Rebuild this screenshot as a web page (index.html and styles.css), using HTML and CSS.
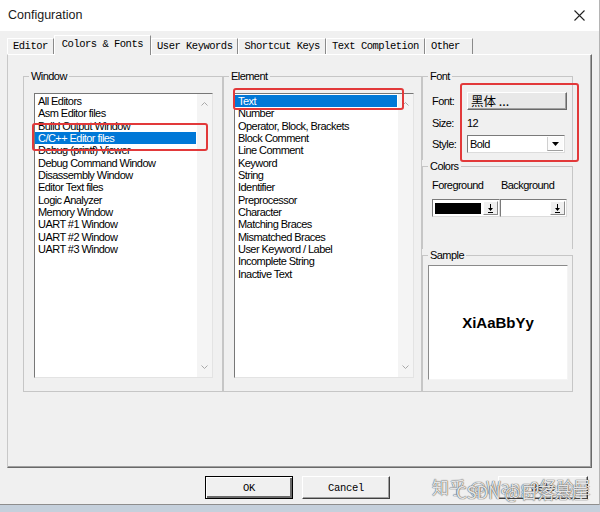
FILE: index.html
```html
<!DOCTYPE html>
<html lang="en">
<head>
  <meta charset="UTF-8">
  <title>Configuration</title>
  <link rel="stylesheet" href="styles.css">
</head>
<body>
  <div class="dialog">
    <div class="titlebar">
      <span class="title">Configuration</span>
      <svg class="close" width="11" height="11" viewBox="0 0 11 11"><path d="M0.5 0.5 10.5 10.5 M10.5 0.5 0.5 10.5" stroke="#222" stroke-width="1.1" fill="none"/></svg>
    </div>

    <div class="tabs">
      <div class="tab">Editor</div>
      <div class="tab active">Colors &amp; Fonts</div>
      <div class="tab">User Keywords</div>
      <div class="tab">Shortcut Keys</div>
      <div class="tab">Text Completion</div>
      <div class="tab">Other</div>
    </div>

    <div class="panel">
      <div class="groups">
        <fieldset class="group g-window">
          <legend>Window</legend>
          <div class="listbox">
            <div class="items">
              <div class="item">All Editors</div>
              <div class="item">Asm Editor files</div>
              <div class="item">Build Output Window</div>
              <div class="item sel">C/C++ Editor files</div>
              <div class="item">Debug (printf) Viewer</div>
              <div class="item">Debug Command Window</div>
              <div class="item">Disassembly Window</div>
              <div class="item">Editor Text files</div>
              <div class="item">Logic Analyzer</div>
              <div class="item">Memory Window</div>
              <div class="item">UART #1 Window</div>
              <div class="item">UART #2 Window</div>
              <div class="item">UART #3 Window</div>
            </div>
            <div class="scroll">
              <svg width="7" height="5" viewBox="0 0 7 5"><path d="M0.5 4.5 3.5 1.5 6.5 4.5" stroke="#a8a8a8" fill="none"/></svg>
              <svg width="7" height="5" viewBox="0 0 7 5"><path d="M0.5 0.5 3.5 3.5 6.5 0.5" stroke="#a8a8a8" fill="none"/></svg>
            </div>
          </div>
        </fieldset>

        <fieldset class="group g-element">
          <legend>Element</legend>
          <div class="listbox">
            <div class="items">
              <div class="item sel">Text</div>
              <div class="item">Number</div>
              <div class="item">Operator, Block, Brackets</div>
              <div class="item">Block Comment</div>
              <div class="item">Line Comment</div>
              <div class="item">Keyword</div>
              <div class="item">String</div>
              <div class="item">Identifier</div>
              <div class="item">Preprocessor</div>
              <div class="item">Character</div>
              <div class="item">Matching Braces</div>
              <div class="item">Mismatched Braces</div>
              <div class="item">User Keyword / Label</div>
              <div class="item">Incomplete String</div>
              <div class="item">Inactive Text</div>
            </div>
            <div class="scroll">
              <svg width="7" height="5" viewBox="0 0 7 5"><path d="M0.5 4.5 3.5 1.5 6.5 4.5" stroke="#a8a8a8" fill="none"/></svg>
              <svg width="7" height="5" viewBox="0 0 7 5"><path d="M0.5 0.5 3.5 3.5 6.5 0.5" stroke="#a8a8a8" fill="none"/></svg>
            </div>
          </div>
        </fieldset>

        <div class="col-font">
          <fieldset class="group g-font">
            <legend>Font</legend>
            <div class="font-grid">
              <span>Font:</span>
              <div class="font-btn">黑体 ...</div>
              <span>Size:</span>
              <span class="size">12</span>
              <span>Style:</span>
              <div class="combo">
                <span class="combo-text">Bold</span>
                <div class="drop">
                  <svg width="7" height="4" viewBox="0 0 7 4"><path d="M0 0h7L3.5 4z" fill="#000"/></svg>
                </div>
              </div>
            </div>
          </fieldset>

          <fieldset class="group g-colors">
            <legend>Colors</legend>
            <div class="colors-grid">
              <span>Foreground</span>
              <span class="bg-label">Background</span>
              <div class="ccombo">
                <div class="swatch black"></div>
                <div class="cdrop"><svg width="7" height="9" viewBox="0 0 7 9"><path d="M3 0h1v4h2L3.5 7 1 4h2z M1 8h5v1H1z" fill="#000"/></svg></div>
              </div>
              <div class="ccombo">
                <div class="swatch white"></div>
                <div class="cdrop"><svg width="7" height="9" viewBox="0 0 7 9"><path d="M3 0h1v4h2L3.5 7 1 4h2z M1 8h5v1H1z" fill="#000"/></svg></div>
              </div>
            </div>
          </fieldset>

          <fieldset class="group g-sample">
            <legend>Sample</legend>
            <div class="sample-box">XiAaBbYy</div>
          </fieldset>
        </div>
      </div>
    </div>

    <div class="btnrow">
      <button class="btn ok">OK</button>
      <button class="btn cancel">Cancel</button>
      <button class="btn help">Help</button>
    </div>

    <!-- annotation boxes and watermark lie over the dialog -->
    <div class="mark m-window"></div>
    <div class="mark m-element"></div>
    <div class="mark m-font"></div>
    <div class="watermark">
      <span class="wm-a">知乎 @Wang9经验屋</span>
      <span class="wm-b">CSDN @日落悬崖</span>
    </div>
  </div>
</body>
</html>
```

FILE: styles.css
```css
* { box-sizing: border-box; }
body { margin:0; width:600px; height:512px; overflow:hidden; background:#c5d0dc; font-family:"Liberation Sans", Arial, sans-serif; font-size:11px; letter-spacing:-0.55px; color:#000; }

.dialog { position:relative; height:505px; background:#f0f0f0; border-bottom:1px solid #8e8e8e; border-right:1px solid #b4b4b4; }

/* title bar */
.titlebar { height:31px; background:#fff; display:flex; align-items:center; justify-content:space-between; padding:0 14px 1px 8px; }
.title { font-size:12.5px; letter-spacing:0; color:#1a1a1a; }

/* tabs */
.tabs { display:flex; align-items:flex-end; height:23px; padding-left:7px; font-family:"Liberation Mono", "Courier New", monospace; font-size:10.5px; letter-spacing:-0.5px; }
.tab { height:16px; line-height:15px; padding:0 5px; border-top:1px solid #fff; border-left:1px solid #fff; border-right:1px solid #8a8a8a; white-space:nowrap; }
.tab.active { position:relative; z-index:1; height:20px; line-height:17px; margin-bottom:-1px; padding:0 7px; background:#f0f0f0; }
.tab:last-child { padding-right:12px; }

/* tab page */
.panel { margin-left:7px; width:585px; height:414px; padding:15px 0 0 15px; border:1px solid; border-color:#fff #696969 #696969 #c8c8c8; box-shadow: inset -1px -1px #a0a0a0; }
.groups { display:flex; }

.group { margin:0; padding:0; min-width:0; border:1px solid #c6c6c6; }
.group legend { margin-left:5px; padding:0 2px; line-height:12px; font-size:11px; }
.g-window { width:200px; }
.g-element { width:199px; }

/* list boxes */
.listbox { display:flex; height:285px; margin:11px 9px 13px 10px; background:#fff; border:1px solid; border-color:#777 #e3e3e3 #e3e3e3 #777; }
.g-element .listbox { margin:11px 7px 13px 10px; }
.items { flex:1; padding-top:1px; }
.item { height:12.33px; line-height:12px; padding-left:3px; margin-right:1px; white-space:nowrap; overflow:hidden; }
.item.sel { background:#0078d7; color:#fff; }
.scroll { width:15px; background:#f4f4f4; display:flex; flex-direction:column; align-items:center; justify-content:space-between; padding:7px 0 7px; }

/* font column */
.col-font { display:flex; flex-direction:column; width:151px; }
.g-font, .g-colors { border-bottom:none; }
.font-grid { display:grid; grid-template-columns:35px 100px; grid-template-rows:18px 15px 18px; row-gap:5px; align-items:center; margin:10px 0 7px 9px; }
.font-btn { height:18px; padding-left:3px; line-height:16px; font-family:"Noto Sans CJK SC", sans-serif; font-size:12.5px; letter-spacing:0; background:#e8e8e8; border:1px solid; border-color:#fff #696969 #696969 #fff; box-shadow: inset -1px -1px #a0a0a0; }
.combo { width:98px; height:18px; display:flex; align-items:center; background:#fff; border:1px solid; border-color:#7a7a7a #dcdcdc #dcdcdc #7a7a7a; }
.combo-text { flex:1; padding-left:2px; }
.drop { width:16px; height:14px; margin-right:1px; display:flex; align-items:center; justify-content:center; background:#fbfbfb; border-left:1px solid #d0d0d0; border-bottom:1px solid #a0a0a0; }

.colors-grid { display:grid; grid-template-columns:68px 67px; grid-template-rows:14px 18px; row-gap:7px; margin:6px 0 32px 9px; line-height:14px; }
.bg-label { padding-left:1px; }
.ccombo { height:18px; display:flex; align-items:center; padding:0 1px 0 2px; background:#fff; border:1px solid; border-color:#7a7a7a #dcdcdc #dcdcdc #7a7a7a; }
.swatch { width:46px; height:11px; }
.swatch.black { background:#000; }
.swatch.white { background:#fff; }
.cdrop { margin-left:auto; width:15px; height:14px; display:flex; align-items:center; justify-content:center; background:#f0f0f0; border:1px solid; border-color:#fff #8a8a8a #8a8a8a #fff; }

.sample-box { height:115px; margin:4px 4px 11px 5px; display:flex; align-items:center; justify-content:center; background:#fff; border:1px solid; border-color:#8a8a8a #f4f4f4 #f4f4f4 #8a8a8a; font-size:15px; font-weight:bold; letter-spacing:0; }

/* dialog buttons */
.btnrow { display:flex; margin-top:8px; padding-left:205px; }
.btn { width:88px; height:23px; padding:0; font-family:"Liberation Mono", "Courier New", monospace; font-size:10.5px; letter-spacing:-0.3px; color:#000; background:#f0f0f0; border:1px solid; border-color:#fff #404040 #404040 #fff; box-shadow: inset -1px -1px #a0a0a0; }
.btn.ok { border-color:#000; box-shadow: inset 1px 1px #fff, inset -2px -2px #696969; }
.btn.cancel { margin-left:9px; }
.btn.help { width:90px; margin-left:108px; }

/* red annotation boxes */
.mark { position:absolute; border:2px solid #e2393a; border-radius:3px; }
.m-window { left:32px; top:123px; width:176px; height:28px; }
.m-element { left:233px; top:88px; width:171px; height:22px; }
.m-font { left:460px; top:83px; width:119px; height:79px; }

.watermark { position:absolute; left:432px; top:474px; width:160px; height:30px; font-family:"Noto Sans CJK SC", sans-serif; font-size:17px; letter-spacing:0; color:rgba(255,255,255,0.85); text-shadow: 0 0 1px #555, 0 0 1px #555; white-space:nowrap; }
.wm-a { position:absolute; left:0; top:0; }
.wm-b { position:absolute; left:24px; top:5px; }
```
